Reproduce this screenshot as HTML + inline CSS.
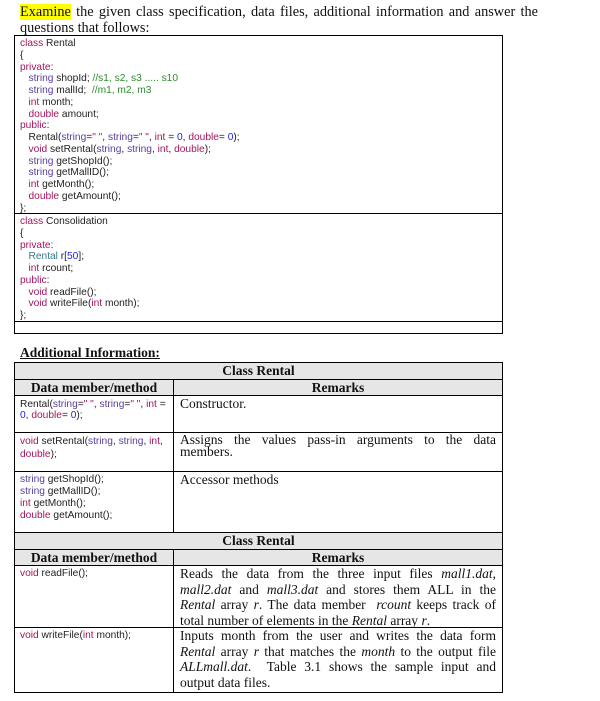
<!DOCTYPE html>
<html><head><meta charset="utf-8"><style>
body{margin:0;width:600px;height:701px;background:#fff;position:relative;overflow:hidden;font-family:"Liberation Serif",serif;color:#111}
.a{position:absolute}
.code{font-family:"Liberation Sans",sans-serif;font-size:10.2px;line-height:11.75px;color:#222;white-space:pre}
.k{color:#a3145f}.t{color:#5a3d9c}.c{color:#2e8b2e}.n{color:#2424e0}.r{color:#2f7a8a}
.box{position:absolute;border:1px solid #000;box-sizing:border-box}
.g{background:#e6e6e6}
.h{font-weight:bold;font-size:13.5px;text-align:center}
.rm{font-size:13.5px;line-height:15.5px;text-align:justify;text-align-last:left}
</style></head><body>
<div class="a" style="left:20px;top:4px;width:518px;font-size:14.3px;line-height:16px;text-align:justify;text-align-last:left"><span style="background:#ffff00">Examine</span> the given class specification, data files, additional information and answer the questions that follows:</div>

<div class="box" style="left:14px;top:35px;width:489px;height:299px;border-width:1.5px"></div>
<div class="a" style="left:14px;top:213px;width:489px;height:1px;background:#000"></div>
<div class="a" style="left:14px;top:321px;width:489px;height:1px;background:#000"></div>
<div class="a code" style="left:20px;top:38px"><span class="k">class</span> Rental
{
<span class="k">private</span>:
   <span class="t">string</span> shopId; <span class="c">//s1, s2, s3 ..... s10</span>
   <span class="t">string</span> mallId;  <span class="c">//m1, m2, m3</span>
   <span class="k">int</span> month;
   <span class="k">double</span> amount;
<span class="k">public</span>:
   Rental(<span class="t">string</span>=<span class="k">" "</span>, <span class="t">string</span>=<span class="k">" "</span>, <span class="k">int</span> = <span class="n">0</span>, <span class="k">double</span>= <span class="n">0</span>);
   <span class="k">void</span> setRental(<span class="t">string</span>, <span class="t">string</span>, <span class="k">int</span>, <span class="k">double</span>);
   <span class="t">string</span> getShopId();
   <span class="t">string</span> getMallID();
   <span class="k">int</span> getMonth();
   <span class="k">double</span> getAmount();
};</div>
<div class="a code" style="left:20px;top:216px"><span class="k">class</span> Consolidation
{
<span class="k">private</span>:
   <span class="r">Rental</span> r[<span class="n">50</span>];
   <span class="k">int</span> rcount;
<span class="k">public</span>:
   <span class="k">void</span> readFile();
   <span class="k">void</span> writeFile(<span class="k">int</span> month);
};</div>

<div class="a" style="left:20px;top:345px;font-size:13.5px;font-weight:bold;text-decoration:underline">Additional Information:</div>

<div class="box g" style="left:14px;top:362px;width:489px;height:18px"></div>
<div class="a h" style="left:14px;top:363px;width:489px">Class Rental</div>
<div class="box g" style="left:14px;top:379px;width:160px;height:17px"></div>
<div class="box g" style="left:173px;top:379px;width:330px;height:17px"></div>
<div class="a h" style="left:14px;top:380px;width:160px">Data member/method</div>
<div class="a h" style="left:173px;top:380px;width:330px">Remarks</div>
<div class="box" style="left:14px;top:395px;width:160px;height:38px"></div>
<div class="box" style="left:173px;top:395px;width:330px;height:38px"></div>
<div class="box" style="left:14px;top:432px;width:160px;height:40px"></div>
<div class="box" style="left:173px;top:432px;width:330px;height:40px"></div>
<div class="box" style="left:14px;top:471px;width:160px;height:62px"></div>
<div class="box" style="left:173px;top:471px;width:330px;height:62px"></div>
<div class="a code" style="left:20px;top:399px;line-height:11px">Rental(<span class="t">string</span>=<span class="k">" "</span>, <span class="t">string</span>=<span class="k">" "</span>, <span class="k">int</span> =
<span class="n">0</span>, <span class="k">double</span>= <span class="n">0</span>);</div>
<div class="a code" style="left:20px;top:436px;line-height:12.5px"><span class="k">void</span> setRental(<span class="t">string</span>, <span class="t">string</span>, <span class="k">int</span>,
<span class="k">double</span>);</div>
<div class="a code" style="left:20px;top:474px;line-height:12px"><span class="t">string</span> getShopId();
<span class="t">string</span> getMallID();
<span class="k">int</span> getMonth();
<span class="k">double</span> getAmount();</div>
<div class="a rm" style="left:180px;top:396px">Constructor.</div>
<div class="a rm" style="left:180px;top:434px;width:316px;line-height:12px">Assigns the values pass-in arguments to the data members.</div>
<div class="a rm" style="left:180px;top:472px">Accessor methods</div>

<div class="box g" style="left:14px;top:532px;width:489px;height:18px"></div>
<div class="a h" style="left:14px;top:533px;width:489px">Class Rental</div>
<div class="box g" style="left:14px;top:549px;width:160px;height:17px"></div>
<div class="box g" style="left:173px;top:549px;width:330px;height:17px"></div>
<div class="a h" style="left:14px;top:550px;width:160px">Data member/method</div>
<div class="a h" style="left:173px;top:550px;width:330px">Remarks</div>
<div class="box" style="left:14px;top:565px;width:160px;height:63px"></div>
<div class="box" style="left:173px;top:565px;width:330px;height:63px"></div>
<div class="box" style="left:14px;top:627px;width:160px;height:66px;border-width:1.5px"></div>
<div class="box" style="left:173px;top:627px;width:330px;height:66px;border-width:1.5px"></div>
<div class="a code" style="left:20px;top:568px"><span class="k">void</span> readFile();</div>
<div class="a code" style="left:20px;top:630px"><span class="k">void</span> writeFile(<span class="k">int</span> month);</div>
<div class="a rm" style="left:180px;top:566px;width:316px">Reads the data from the three input files <i>mall1.dat</i>, <i>mall2.dat</i> and <i>mall3.dat</i> and stores them ALL in the <i>Rental</i> array <i>r</i>. The data member &nbsp;<i>rcount</i> keeps track of total number of elements in the <i>Rental</i> array <i>r</i>.</div>
<div class="a rm" style="left:180px;top:628px;width:316px">Inputs month from the user and writes the data form <i>Rental</i> array <i>r</i> that matches the <i>month</i> to the output file <i>ALLmall.dat</i>.&nbsp; Table 3.1 shows the sample input and output data files.</div>
</body></html>
